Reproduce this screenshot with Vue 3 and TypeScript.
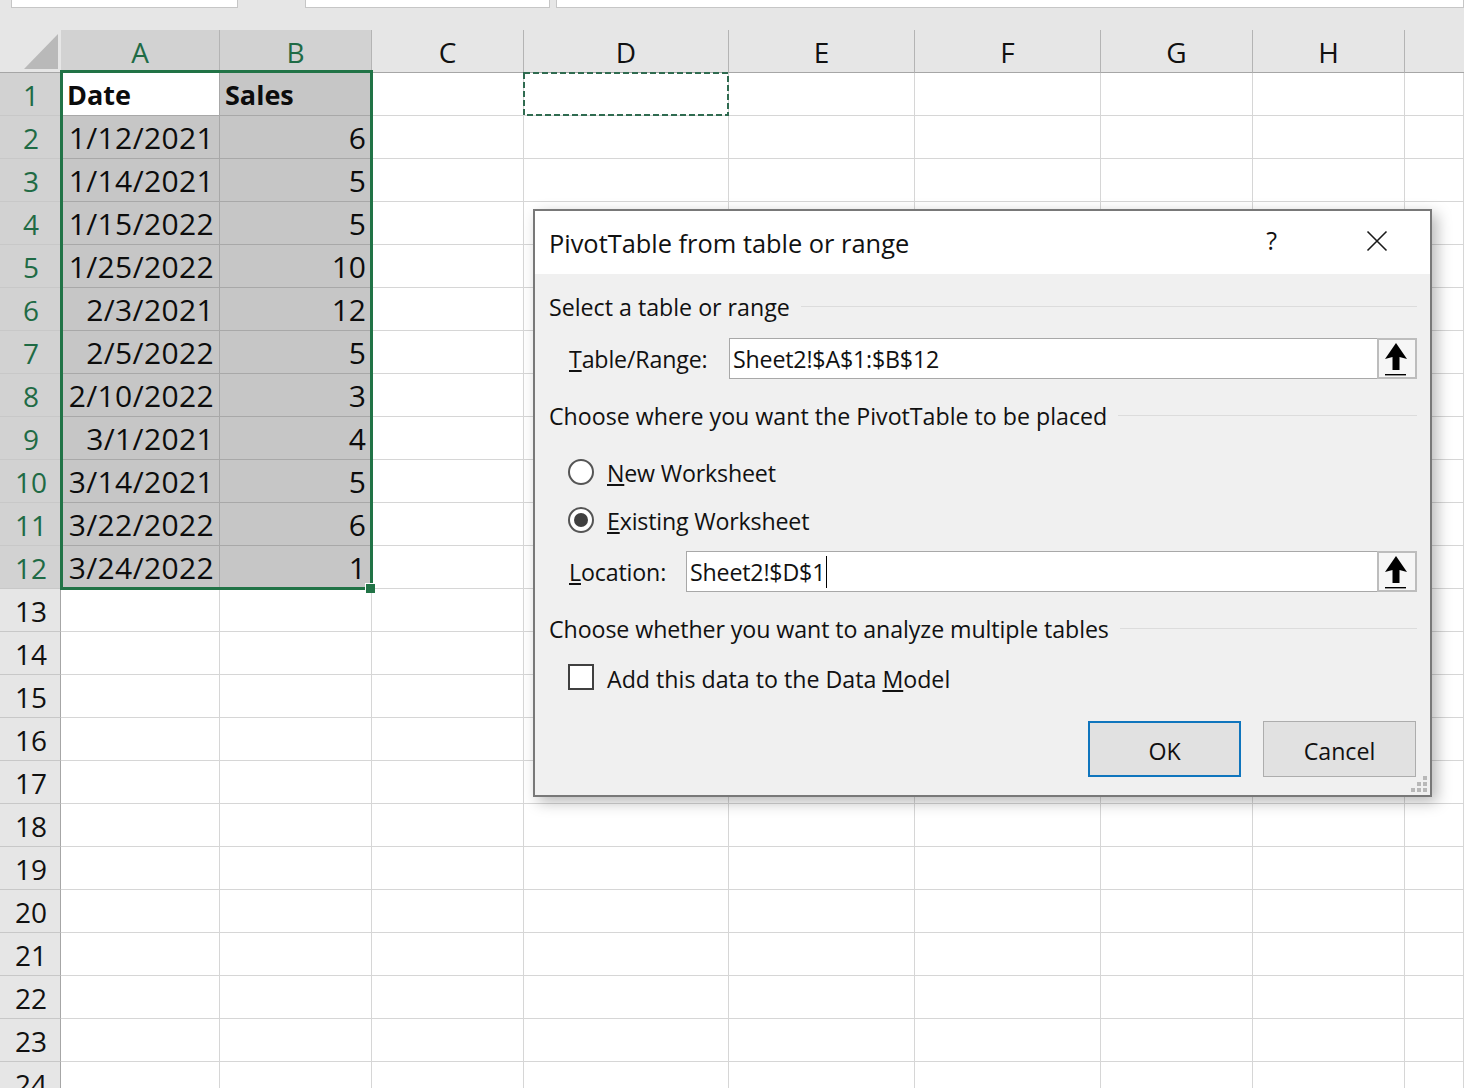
<script setup lang="ts">
const columns = ['A', 'B', 'C', 'D', 'E', 'F', 'G', 'H', '']

const sales: [string, string][] = [
  ['Date', 'Sales'],
  ['1/12/2021', '6'],
  ['1/14/2021', '5'],
  ['1/15/2022', '5'],
  ['1/25/2022', '10'],
  ['2/3/2021', '12'],
  ['2/5/2022', '5'],
  ['2/10/2022', '3'],
  ['3/1/2021', '4'],
  ['3/14/2021', '5'],
  ['3/22/2022', '6'],
  ['3/24/2022', '1'],
]

const rows = Array.from({ length: 24 }, (_, i) => i + 1)
const blankCols = columns.slice(2)

function isData(row: number) {
  return row <= sales.length
}
</script>

<template>
  <div class="page">
    <div class="ribbon">
      <div class="tab tab-a"></div>
      <div class="tab tab-b"></div>
      <div class="tab tab-c"></div>
    </div>

    <div class="sheet">
      <div class="corner">
        <svg width="60" height="42" viewBox="0 0 60 42"><polygon points="58,4 58,39 24,39" fill="#b9b9b9" /></svg>
      </div>
      <div
        v-for="(col, i) in columns"
        :key="i"
        class="col-head"
        :class="{ active: i < 2, last: i === 8 }"
      >{{ col }}</div>

      <template v-for="row in rows" :key="row">
        <div class="row-head" :class="{ active: isData(row) }">{{ row }}</div>
        <template v-if="isData(row)">
          <div class="cell date" :class="{ head: row === 1, plain: row === 1 }">{{ sales[row - 1][0] }}</div>
          <div class="cell num" :class="{ head: row === 1, second: row === 1 }">{{ sales[row - 1][1] }}</div>
        </template>
        <template v-else>
          <div class="cell blank"></div>
          <div class="cell blank"></div>
        </template>
        <div v-for="(col, i) in blankCols" :key="i" class="cell blank"></div>
      </template>
    </div>

    <div class="selection"><span class="handle"></span></div>
    <svg class="ants" width="206" height="44" viewBox="0 0 206 44">
      <rect x="1" y="1" width="204" height="42" fill="none" stroke="#2f6b50" stroke-width="2" stroke-dasharray="6 3" />
    </svg>

    <div class="dialog">
      <div class="title-bar">
        <span class="title">PivotTable from table or range</span>
        <span class="help">?</span>
        <svg class="close" width="22" height="22" viewBox="0 0 22 22">
          <path d="M1.5 1.5 L20.5 20.5 M20.5 1.5 L1.5 20.5" stroke="#1a1a1a" stroke-width="1.6" fill="none" />
        </svg>
      </div>

      <div class="body">
        <div class="legend first"><span>Select a table or range</span><i></i></div>

        <div class="field-row range-row">
          <label class="field-label"><u>T</u>able/Range:</label>
          <div class="input range">
            <span class="value">Sheet2!$A$1:$B$12</span>
            <button class="picker">
              <svg width="26" height="34" viewBox="0 0 26 34">
                <path d="M13 1 L24 17 L16.5 15 L16.5 28 L9.5 28 L9.5 15 L2 17 Z" fill="#000" />
                <rect x="2" y="32" width="21" height="1.4" fill="#000" />
              </svg>
            </button>
          </div>
        </div>

        <div class="legend second"><span>Choose where you want the PivotTable to be placed</span><i></i></div>

        <div class="option radio-one">
          <span class="radio"></span>
          <span class="option-text"><u>N</u>ew Worksheet</span>
        </div>
        <div class="option">
          <span class="radio checked"></span>
          <span class="option-text"><u>E</u>xisting Worksheet</span>
        </div>

        <div class="field-row loc-row">
          <label class="field-label"><u>L</u>ocation:</label>
          <div class="input loc">
            <span class="value">Sheet2!$D$1<b class="caret"></b></span>
            <button class="picker">
              <svg width="26" height="34" viewBox="0 0 26 34">
                <path d="M13 1 L24 17 L16.5 15 L16.5 28 L9.5 28 L9.5 15 L2 17 Z" fill="#000" />
                <rect x="2" y="32" width="21" height="1.4" fill="#000" />
              </svg>
            </button>
          </div>
        </div>

        <div class="legend second tight"><span>Choose whether you want to analyze multiple tables</span><i></i></div>

        <div class="option check-row">
          <span class="check"></span>
          <span class="model-text">Add this data to the Data <u>M</u>odel</span>
        </div>

        <div class="buttons">
          <button class="btn primary">OK</button>
          <button class="btn">Cancel</button>
        </div>
      </div>

      <svg class="grip" width="17" height="17" viewBox="0 0 17 17" fill="#b8b8b8">
        <rect x="12" y="0" width="4" height="4" />
        <rect x="6" y="6" width="4" height="4" />
        <rect x="12" y="6" width="4" height="4" />
        <rect x="0" y="12" width="4" height="4" />
        <rect x="6" y="12" width="4" height="4" />
        <rect x="12" y="12" width="4" height="4" />
      </svg>
    </div>
  </div>
</template>

<style>
html,
body {
  margin: 0;
  background: #fff;
}
</style>

<style scoped>
.page {
  position: relative;
  width: 1464px;
  height: 1088px;
  overflow: hidden;
  background: #fff;
  font-family: "Open Sans", "Noto Sans", sans-serif;
  color: #111;
}

.ribbon {
  display: flex;
  height: 30px;
  background: #e6e6e6;
}

.tab {
  height: 7px;
  background: #fff;
  border: 1px solid #c6c6c6;
  border-top: 0;
  box-sizing: content-box;
}

.tab-a {
  width: 225px;
  margin-left: 11px;
}

.tab-b {
  width: 243px;
  margin-left: 67px;
}

.tab-c {
  flex: 1;
  margin-left: 6px;
}

.sheet {
  display: grid;
  grid-template-columns: 61px 159px 152px 152px 205px 186px 186px 152px 152px 59px;
  grid-auto-rows: 43px;
}

.corner {
  background: #e6e6e6;
  border-bottom: 1px solid #a6a6a6;
  box-sizing: border-box;
}

.corner svg {
  display: block;
}

.col-head {
  display: flex;
  align-items: center;
  justify-content: center;
  box-sizing: border-box;
  background: #e6e6e6;
  border-bottom: 1px solid #a6a6a6;
  border-right: 1px solid #b4b4b4;
  font-size: 28px;
  padding-top: 2px;
}

.col-head.active {
  background: #d2d2d2;
  color: #1f6b45;
}

.col-head.last {
  border-right: 0;
}

.row-head {
  display: flex;
  align-items: center;
  justify-content: center;
  box-sizing: border-box;
  background: #e6e6e6;
  border-bottom: 1px solid #c8c8c8;
  border-right: 1px solid #a6a6a6;
  font-size: 28px;
  padding-left: 2px;
  padding-top: 2px;
}

.row-head.active {
  background: #d2d2d2;
  color: #1f6b45;
}

.cell {
  display: flex;
  align-items: center;
  box-sizing: border-box;
  border-right: 1px solid #d6d6d6;
  border-bottom: 1px solid #d6d6d6;
  font-size: 30px;
  color: #0c0c0c;
  white-space: nowrap;
}

.date {
  justify-content: flex-end;
  padding-right: 5px;
  letter-spacing: 0.35px;
  background: #c6c6c6;
  border-color: #a8a8a8;
}

.num {
  justify-content: flex-end;
  padding-right: 5px;
  background: #c6c6c6;
  border-color: #a8a8a8;
}

.head {
  justify-content: flex-start;
  padding-left: 6px;
  font-weight: 700;
  font-size: 27px;
  letter-spacing: 0;
}

.head.second {
  padding-left: 5px;
}

.plain {
  background: #fff;
}

.selection {
  position: absolute;
  left: 60px;
  top: 70px;
  width: 313px;
  height: 520px;
  box-sizing: border-box;
  border: 3px solid #217346;
}

.handle {
  position: absolute;
  right: -5px;
  bottom: -6px;
  width: 9px;
  height: 9px;
  background: #217346;
  border-left: 1px solid #fff;
  border-top: 1px solid #fff;
}

.ants {
  position: absolute;
  left: 523px;
  top: 72px;
}

.dialog {
  position: absolute;
  left: 533px;
  top: 209px;
  width: 899px;
  height: 588px;
  box-sizing: border-box;
  border: 2px solid #787878;
  background: #f0f0f0;
  box-shadow: 5px 5px 14px rgba(0, 0, 0, 0.28);
  font-size: 23.2px;
}

.title-bar {
  display: flex;
  align-items: center;
  height: 63px;
  padding-left: 14px;
  background: #fff;
}

.title {
  flex: 1;
  font-size: 25.4px;
}

.help {
  margin-right: 89px;
  font-size: 25px;
  margin-top: -5px;
}

.close {
  margin-right: 42px;
  margin-top: -4px;
}

.body {
  display: flex;
  flex-direction: column;
  padding: 16px 13px 0 14px;
}

.legend {
  display: flex;
  align-items: center;
  height: 34px;
  gap: 11px;
  white-space: nowrap;
}

.legend i {
  flex: 1;
  height: 1px;
  background: #dcdcdc;
  margin-top: -2px;
}

.legend.second {
  margin-top: 21px;
}

.legend.tight span {
  letter-spacing: -0.08px;
}

.field-row {
  display: flex;
  align-items: center;
  height: 40px;
  padding-left: 20px;
}

.range-row {
  margin-top: 14px;
}

.loc-row {
  margin-top: 7px;
}

.field-label {
  padding-top: 2px;
  letter-spacing: -0.15px;
  white-space: nowrap;
}

.input {
  display: flex;
  align-items: center;
  height: 41px;
  box-sizing: border-box;
  background: #fff;
  border: 1px solid #a8a8a8;
  padding-left: 3px;
  margin-top: 1px;
}

.range {
  width: 688px;
  margin-left: auto;
}

.loc {
  width: 731px;
  margin-left: auto;
}

.value {
  flex: 1;
  display: flex;
  align-items: center;
  padding-top: 1px;
  letter-spacing: -0.18px;
  white-space: nowrap;
}

.caret {
  display: inline-block;
  width: 1px;
  height: 32px;
  margin-left: 1px;
  background: #000;
}

.picker {
  display: flex;
  align-items: center;
  justify-content: center;
  width: 40px;
  height: 41px;
  margin-right: -1px;
  padding: 0 2px 0 0;
  box-sizing: border-box;
  background: #f6f6f6;
  border: 2px solid #bdbdbd;
}

.option {
  display: flex;
  align-items: center;
  height: 48px;
  padding-left: 19px;
  gap: 13px;
  white-space: nowrap;
}

.option-text {
  padding-top: 2px;
  letter-spacing: -0.18px;
}

.model-text {
  padding-top: 3px;
}

.radio-one {
  margin-top: 15px;
}

.radio {
  position: relative;
  width: 26px;
  height: 26px;
  box-sizing: border-box;
  border: 2px solid #555;
  border-radius: 50%;
  background: #fff;
}

.radio.checked::after {
  content: "";
  position: absolute;
  left: 4px;
  top: 4px;
  width: 14px;
  height: 14px;
  border-radius: 50%;
  background: #404040;
}

.check-row {
  margin-top: 7px;
}

.check {
  width: 26px;
  height: 26px;
  box-sizing: border-box;
  border: 2px solid #404040;
  background: #fff;
}

.buttons {
  display: flex;
  justify-content: flex-end;
  gap: 22px;
  margin-top: 20px;
  padding-right: 1px;
}

.btn {
  width: 153px;
  height: 56px;
  padding: 3px 0 0;
  box-sizing: border-box;
  background: #e1e1e1;
  border: 1px solid #adadad;
  font-family: inherit;
  font-size: 23.2px;
  color: #111;
}

.btn.primary {
  border: 2px solid #0f75bd;
}

.grip {
  position: absolute;
  right: 2px;
  bottom: 2px;
}
</style>
